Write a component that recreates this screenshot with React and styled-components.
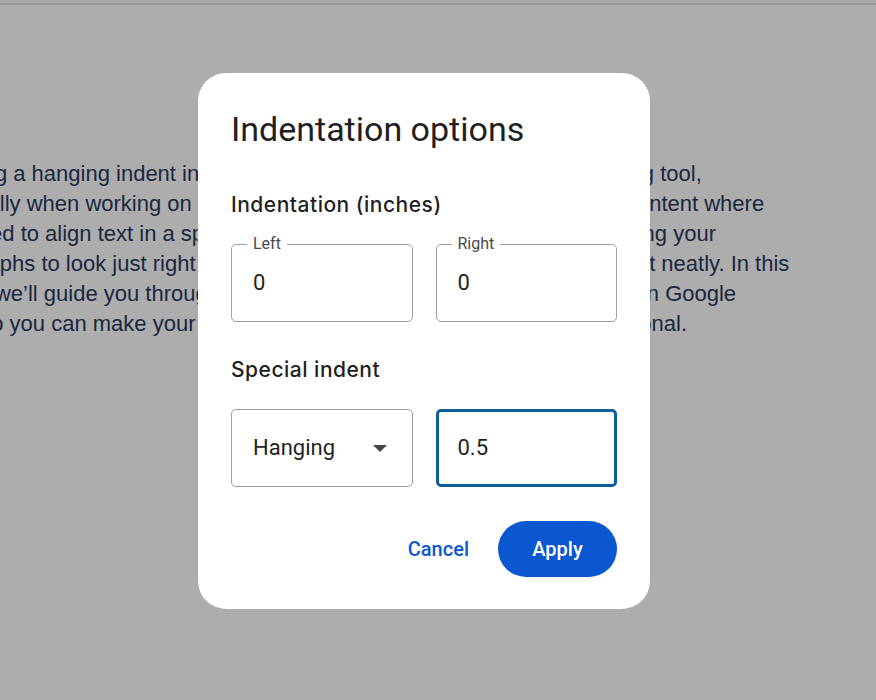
import React from "react";
import styled, { createGlobalStyle } from "styled-components";

const GlobalStyle = createGlobalStyle`
  html, body {
    margin: 0;
    padding: 0;
    background: #ffffff;
  }
  body {
    font-family: "Liberation Sans", Arial, sans-serif;
    overflow: hidden;
  }
  * { box-sizing: border-box; }
`;

const Page = styled.div`
  min-height: 100vh;
  overflow: hidden;
`;

const TopBar = styled.div`
  height: 5px;
  background: #f7f7f7;
  border-bottom: 2px solid #e2e2e2;
`;

const Article = styled.article`
  padding-top: 154px;
  margin-left: -76px;
`;

const Paragraph = styled.p`
  margin: 0;
  font-family: "Liberation Sans", Arial, sans-serif;
  font-size: 22px;
  line-height: 30px;
  color: #2a3a5e;
  white-space: nowrap;
`;

const Line = styled.span`
  display: block;
`;

const Scrim = styled.div`
  position: fixed;
  inset: 0;
  background: rgba(0, 0, 0, 0.32);
  display: flex;
  align-items: flex-start;
  justify-content: flex-start;
  padding: 73px 0 0 198px;
`;

const Dialog = styled.div`
  width: 452px;
  background: #ffffff;
  border-radius: 28px;
  padding: 36px 33px 32px 33px;
  font-family: Roboto, "Liberation Sans", sans-serif;
  color: #1f1f1f;
`;

const Title = styled.h2`
  margin: 0 0 42px;
  font-family: Roboto, sans-serif;
  font-weight: 400;
  font-size: 34px;
  line-height: 40px;
  color: #1f1f1f;
`;

const Heading = styled.h3`
  margin: ${(p) => (p.$spaced ? "34px 0 25px" : "0 0 25px")};
  font-family: Inter, Roboto, sans-serif;
  font-weight: 500;
  font-size: 21px;
  line-height: 28px;
  letter-spacing: 0.5px;
  color: #1f1f1f;
`;

const FieldRow = styled.div`
  display: grid;
  grid-template-columns: 1fr 1fr;
  column-gap: 23px;
`;

const Field = styled.div`
  position: relative;
  height: 78px;
  display: flex;
  align-items: center;
  justify-content: space-between;
  border-radius: 5px;
  border: ${(p) => (p.$focused ? "3px solid #0d609c" : "1px solid #9f9f9f")};
  padding: ${(p) => (p.$focused ? "0 24px 0 19px" : "0 25px 0 21px")};
  font-family: Roboto, sans-serif;
  font-size: 22px;
  color: #1f1f1f;
`;

const FloatLabel = styled.span`
  position: absolute;
  top: -11px;
  left: 15px;
  padding: 0 6px;
  background: #ffffff;
  font-family: Roboto, sans-serif;
  font-size: 16px;
  line-height: 20px;
  color: #4a4a4a;
`;

const Value = styled.span`
  line-height: 26px;
`;

const Caret = styled.svg`
  width: 14px;
  height: 7px;
  display: block;
`;

const Actions = styled.div`
  margin-top: 34px;
  display: flex;
  justify-content: flex-end;
  align-items: center;
  gap: 13px;
`;

const TextButton = styled.button`
  height: 56px;
  padding: 0 16px;
  border: none;
  background: transparent;
  border-radius: 28px;
  font-family: Roboto, sans-serif;
  font-weight: 500;
  font-size: 20px;
  color: #0b57d0;
  cursor: pointer;
`;

const FilledButton = styled(TextButton)`
  width: 119px;
  padding: 0;
  background: #0b57d0;
  color: #ffffff;
`;

const lines = [
  "Creating a hanging indent in Google Docs is a simple and useful formatting tool,",
  "especially when working on academic essays, bibliographies, and other content where",
  "you need to align text in a specific way. Whether you are typing or formatting your",
  "paragraphs to look just right or simply want to organize your written content neatly. In this",
  "article, we\u2019ll guide you through the process of creating the hanging indent in Google",
  "Docs so you can make your documents seem more polished and professional.",
];

export default function App() {
  return (
    <>
      <GlobalStyle />
      <Page>
        <TopBar />
        <Article>
          <Paragraph>
            {lines.map((l, i) => (
              <Line key={i}>{l}</Line>
            ))}
          </Paragraph>
        </Article>
      </Page>
      <Scrim>
        <Dialog role="dialog" aria-label="Indentation options">
          <Title>Indentation options</Title>
          <Heading>Indentation (inches)</Heading>
          <FieldRow>
            <Field>
              <FloatLabel>Left</FloatLabel>
              <Value>0</Value>
            </Field>
            <Field>
              <FloatLabel>Right</FloatLabel>
              <Value>0</Value>
            </Field>
          </FieldRow>
          <Heading $spaced>Special indent</Heading>
          <FieldRow>
            <Field>
              <Value>Hanging</Value>
              <Caret viewBox="0 0 14 7">
                <polygon points="0,0 14,0 7,7" fill="#444746" />
              </Caret>
            </Field>
            <Field $focused>
              <Value>0.5</Value>
            </Field>
          </FieldRow>
          <Actions>
            <TextButton>Cancel</TextButton>
            <FilledButton>Apply</FilledButton>
          </Actions>
        </Dialog>
      </Scrim>
    </>
  );
}
